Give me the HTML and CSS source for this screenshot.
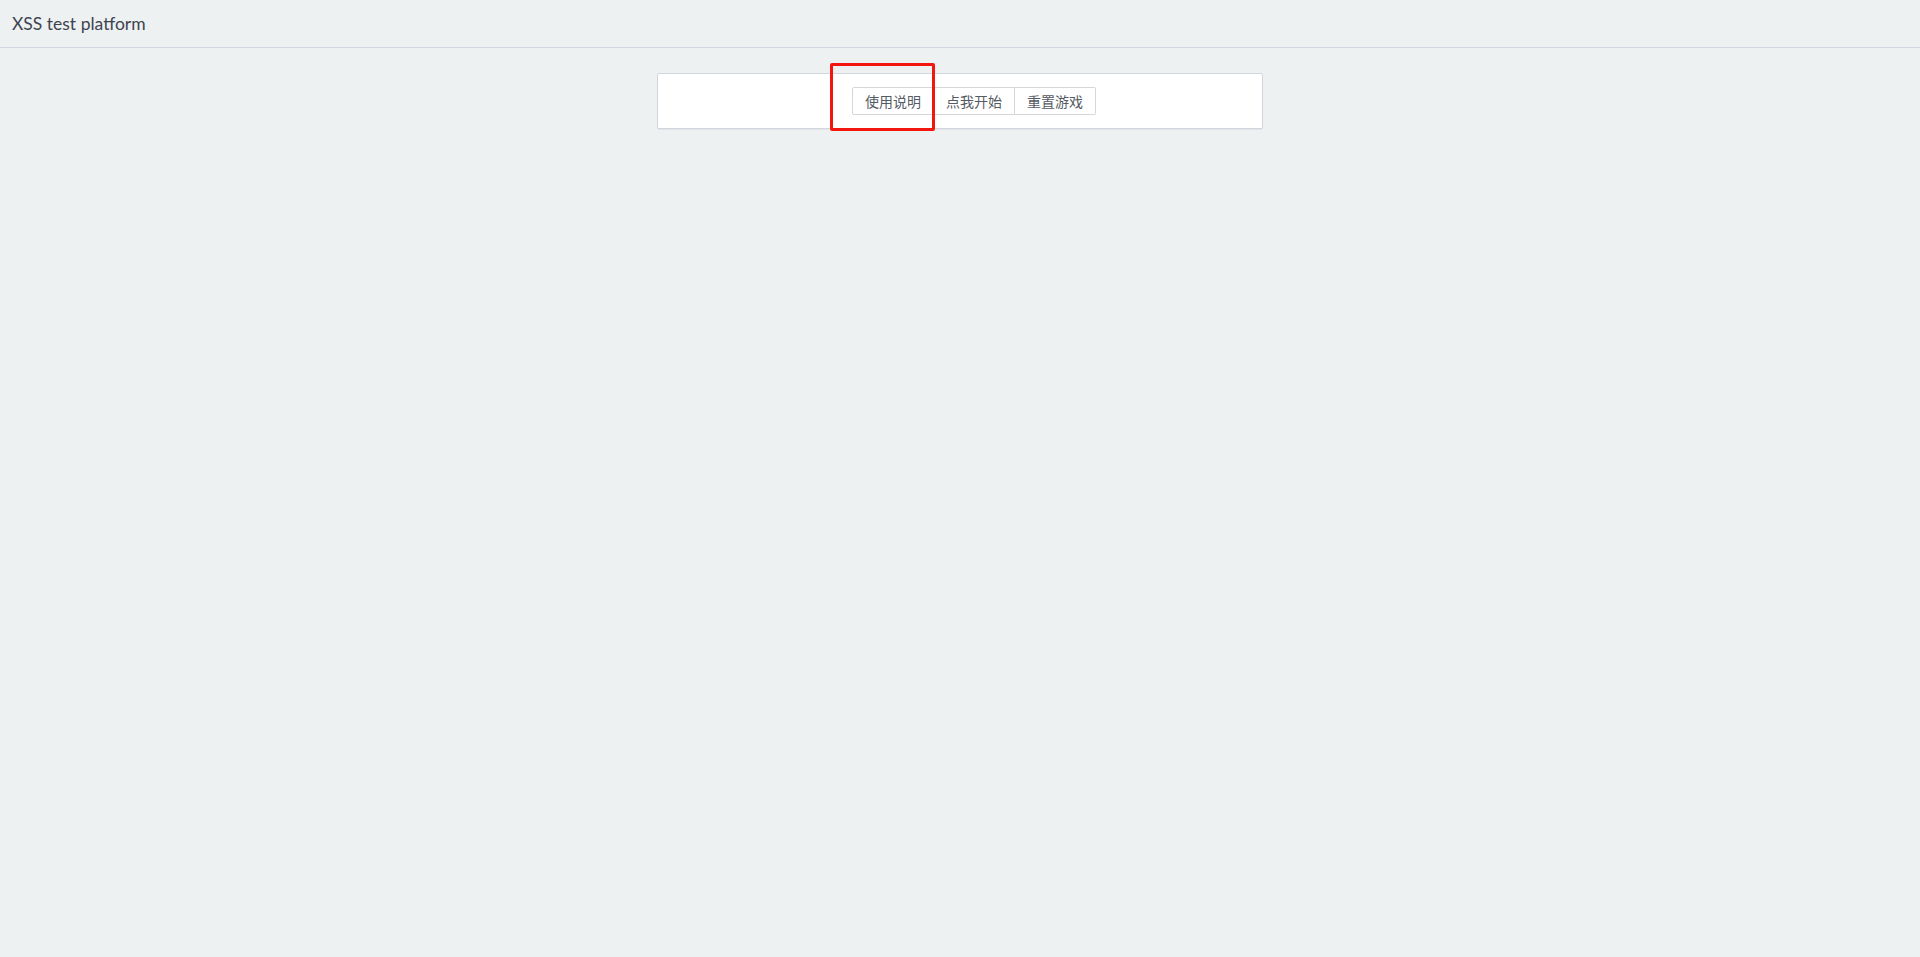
FILE: index.html
```html
<!DOCTYPE html>
<html lang="zh-CN">
<head>
    <meta charset="UTF-8">
    <meta name="viewport" content="width=device-width, initial-scale=1.0">
    <title>XSS test platform</title>
    <link rel="stylesheet" href="styles.css">
</head>
<body>

    <div class="header">
        <span class="brand">XSS test platform</span>
    </div>

    <div class="box">
        <div class="btngroup">
            <button class="btn">使用说明</button>
            <button class="btn">点我开始</button>
            <button class="btn">重置游戏</button>
            <div class="mark"></div>
        </div>
    </div>

</body>
</html>
```

FILE: styles.css
```css
html{
    margin: 0;
    height: 100%;
}

body{
    margin: 0;
    min-height: 100%;
    background-color: #eef1f2;
    font-family: "Noto Sans CJK SC", sans-serif;
}

.header{
    height: 47px;
    border-bottom: 1px solid #d2d6de;
    display: flex;
    align-items: center;
    padding-left: 12px;
}

.brand{
    font-family: Lato, "Noto Sans CJK SC", sans-serif;
    font-size: 17.5px;
    color: #3d4450;
    margin-top: -1px;
}

.box{
    margin: 25px auto 0 auto;
    background-color: #fff;
    border: 1px solid #d2d6de;
    border-radius: 2px;
    box-shadow: 0 1px 1px rgba(0, 0, 0, 0.05);
    padding: 13px 0 13px 194px;
    box-sizing: border-box;
    width: 606px;
    height: 56px;
    display: flex;
    align-items: flex-start;
}

.btngroup{
    position: relative;
    display: flex;
}

.btn{
    height: 28px;
    padding: 0 12px;
    margin: 0;
    background-color: #fff;
    border: 1px solid #d4d6da;
    border-left: none;
    color: #555b63;
    font-family: "Noto Sans CJK SC", sans-serif;
    font-size: 14px;
    line-height: 26px;
    cursor: pointer;
}

.btn:first-child{
    border-left: 1px solid #d4d6da;
    border-radius: 2px 0 0 2px;
}

.btn:last-of-type{
    border-radius: 0 2px 2px 0;
}

/* red annotation frame */
.mark{
    position: absolute;
    left: -22px;
    top: -24px;
    width: 99px;
    height: 62px;
    border: 3px solid #f3160f;
    border-radius: 2px;
}
```
